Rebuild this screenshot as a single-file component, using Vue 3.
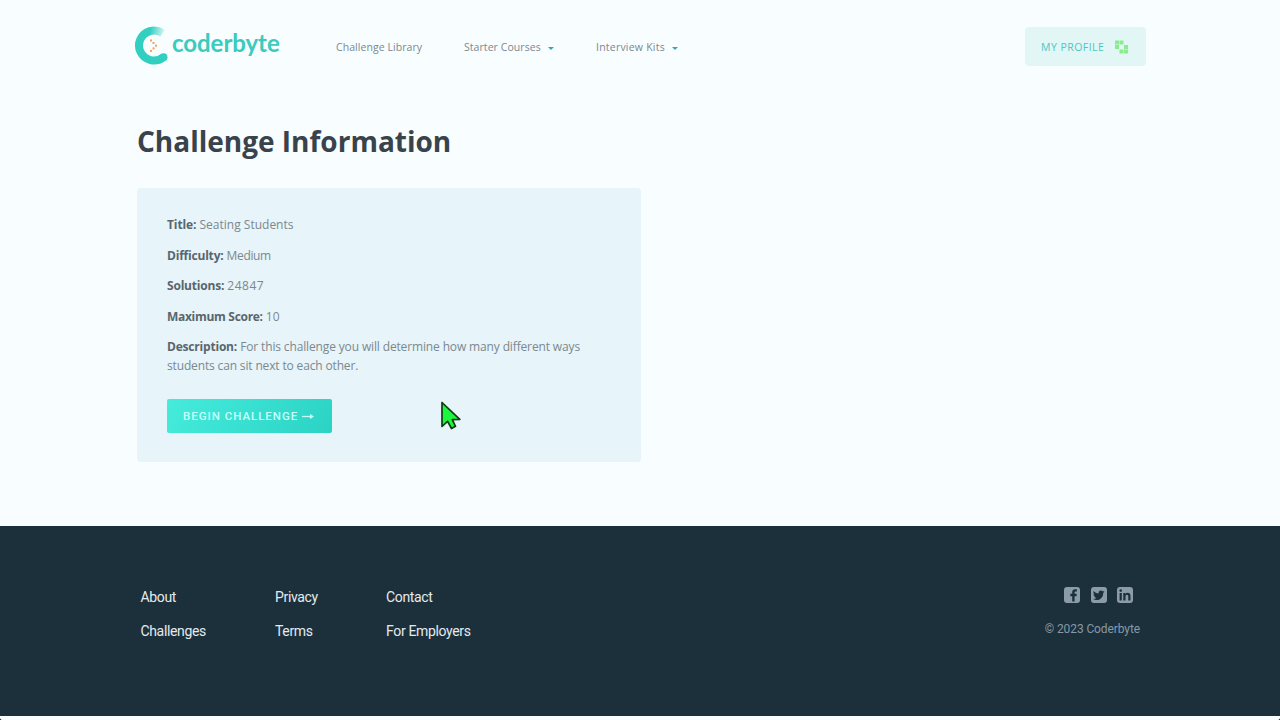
<template>
  <div class="page">
    <header class="header">
      <a class="logo">
        <svg class="logo-mark" width="38" height="40" viewBox="0 0 38 40">
          <defs>
            <linearGradient id="ring" gradientUnits="userSpaceOnUse" x1="18" y1="0" x2="33" y2="3">
              <stop offset="0" stop-color="#30cfc0" />
              <stop offset="1" stop-color="#30cfc0" stop-opacity="0.1" />
            </linearGradient>
          </defs>
          <path d="M16.5 5.2 A15 15 0 0 1 29.5 7.1" fill="none" stroke="url(#ring)" stroke-width="8" />
          <path d="M17 5.040 A15 15 0 1 0 30 31.500" fill="none" stroke="#30cfc0" stroke-width="8" />
          <circle cx="30.500" cy="31.200" r="4" fill="#30cfc0" />
          <g fill="#f3a44f">
            <rect v-for="(dot, i) in arrowDots" :key="i" :x="dot[0]" :y="dot[1]" width="2" height="2" />
          </g>
        </svg>
        <span class="logo-text">coderbyte</span>
      </a>
      <nav class="nav">
        <a class="nav-library">Challenge Library</a>
        <a class="nav-courses">Starter Courses <i class="caret"></i></a>
        <a class="nav-kits">Interview Kits <i class="caret"></i></a>
      </nav>
      <a class="profile">
        <span>MY PROFILE</span>
        <svg width="14" height="14" viewBox="0 0 14 14" fill="#8aec8c">
          <path d="M0 0.5h4v4h-4zM4.500 0.500h4v4h-4zM0 5h4v4h-4zM9 5h4v4h-4zM4.500 9.500h4v4h-4zM9 9.500h4v4h-4z" />
        </svg>
      </a>
    </header>

    <main class="main">
      <h1>Challenge Information</h1>
      <section class="card">
        <p v-for="item in details" :key="item.label" :class="item.cls">
          <b>{{ item.label }}:</b> <span>{{ item.value }}</span>
        </p>
        <p class="description">
          <b>Description:</b> <span class="line-one">For this challenge you will determine how many different ways</span><br />
          <span class="line-two">students can sit next to each other.</span>
        </p>
        <button class="begin">
          <span>BEGIN CHALLENGE</span>
          <svg width="12" height="8" viewBox="0 0 12 8">
            <path d="M0 4.500h9" stroke="currentColor" stroke-width="1.300" />
            <path d="M8 2L12 4.500L8 7z" fill="currentColor" />
          </svg>
        </button>
      </section>
    </main>

    <footer class="footer">
      <div class="links">
        <div v-for="(column, i) in footerLinks" :key="i" class="column">
          <a v-for="link in column" :key="link">{{ link }}</a>
        </div>
      </div>
      <div class="social">
        <div class="icons">
          <svg width="16" height="16" viewBox="0 0 16 16">
            <rect width="16" height="16" rx="3" fill="#8c9ba8" />
            <path d="M8.200 14.500V9.200H6.300V6.800h1.900V5.200c0-2 1.100-3 3-3h1.700v2.300h-1.200c-.8 0-1.100.4-1.100 1.100v1.200h2.200l-.3 2.400h-1.900v5.300z" fill="#1c303c" />
          </svg>
          <svg width="16" height="16" viewBox="0 0 16 16">
            <rect width="16" height="16" rx="3" fill="#8c9ba8" />
            <path d="M13.500 4.500c-.4.200-.9.300-1.300.4.500-.3.800-.7 1-1.200-.5.300-1 .5-1.500.6a2.400 2.400 0 0 0-4.100 2.200C5.600 6.400 3.800 5.400 2.700 4c-.6 1.100-.3 2.500.8 3.200-.4 0-.8-.1-1.100-.3 0 1.200.8 2.100 1.900 2.400-.4.100-.7.100-1.100 0 .3 1 1.200 1.600 2.300 1.700-1 .8-2.200 1.100-3.500 1 3.900 2.400 10.200.8 10.200-6 .5-.4.900-.9 1.300-1.500z" fill="#1c303c" />
          </svg>
          <svg width="16" height="16" viewBox="0 0 16 16">
            <rect width="16" height="16" rx="3" fill="#8c9ba8" />
            <g fill="#1c303c">
              <circle cx="3.700" cy="3.600" r="1.300" />
              <path d="M2.600 6h2.200v7.500H2.600zM6.300 6h2.100v1c.5-.8 1.200-1.200 2.200-1.200 2 0 2.900 1.200 2.900 3.300v4.400h-2.200V9.600c0-1.100-.4-1.800-1.300-1.800-1 0-1.500.7-1.500 1.800v3.900H6.300z" />
            </g>
          </svg>
        </div>
        <p class="copyright">© 2023 Coderbyte</p>
      </div>
    </footer>
    <div class="bottom-edge"></div>

    <svg class="cursor" width="24" height="32" viewBox="0 0 24 32">
      <path d="M2 2.500V26.500L7.600 21.300L11.500 28.500L15.500 26.300L12.300 19.700L19.800 19.300Z" fill="#1ff53c" stroke="#103a18" stroke-width="1.700" stroke-linejoin="round" />
    </svg>
  </div>
</template>

<script setup>
const details = [
  { label: "Title", value: "Seating Students", cls: "title" },
  { label: "Difficulty", value: "Medium", cls: "difficulty" },
  { label: "Solutions", value: "24847", cls: "solutions" },
  { label: "Maximum Score", value: "10", cls: "score" }
]

const footerLinks = [
  ["About", "Challenges"],
  ["Privacy", "Terms"],
  ["Contact", "For Employers"]
]

const arrowDots = [
  [17, 13.5],
  [19.5, 16],
  [22, 18.7],
  [19.5, 21.4],
  [17, 23.9]
]
</script>

<style>
body {
  background: #111;
}
</style>

<style scoped>
.page {
  position: relative;
  box-sizing: border-box;
  height: 720px;
  overflow: hidden;
  display: flex;
  flex-direction: column;
  border-radius: 0 0 3px 3px;
  background: #f8fdff;
  font-family: "Open Sans", "Noto Sans", sans-serif;
  color: #7b888e;
}

.header {
  display: flex;
  align-items: center;
  height: 94px;
  padding: 0 134px;
  flex: none;
}

.logo {
  display: flex;
  align-items: center;
  width: 202px;
}

.logo-mark {
  margin: -3px 1px 0 -1px;
}

.logo-text {
  font-family: Lato, sans-serif;
  font-weight: 700;
  font-size: 24px;
  line-height: 28px;
  letter-spacing: -0.05px;
  color: #3bcabe;
  margin-top: -8px;
}

.nav {
  display: flex;
  flex: 1;
  font-size: 10.5px;
  line-height: 16px;
  letter-spacing: 0.06px;
  white-space: nowrap;
}

.nav-library {
  width: 128px;
}

.nav-courses {
  width: 132px;
}

.nav-kits {
  letter-spacing: 0.22px;
}

.nav a {
  display: flex;
  align-items: center;
}

.caret {
  border: 3px solid transparent;
  border-top: 3px solid #35aaa8;
  border-bottom: 0;
  margin: 2px 0 0 7px;
}

.profile {
  display: flex;
  align-items: center;
  justify-content: space-between;
  box-sizing: border-box;
  width: 121px;
  height: 39px;
  margin-top: -1px;
  padding: 1px 17px 0 16px;
  border-radius: 4px;
  background: #e2f6f6;
  color: #4fc5bf;
  font-size: 10.5px;
  letter-spacing: 0.46px;
  white-space: nowrap;
}

.main {
  height: 432px;
  padding: 0 137px;
  flex: none;
}

h1 {
  margin: 27px 0 26px;
  font-size: 28px;
  line-height: 41px;
  font-weight: 700;
  color: #39434b;
  white-space: nowrap;
}

.card {
  box-sizing: border-box;
  width: 504px;
  height: 274px;
  padding: 28px 30px;
  border-radius: 4px;
  background: #e7f4f9;
  font-size: 12px;
  line-height: 18.4px;
  white-space: nowrap;
}

.card p {
  margin: 0 0 12.2px;
}

.card b {
  font-weight: 700;
  letter-spacing: -0.2px;
  color: #59666d;
}

.card .title b {
  letter-spacing: -0.1px;
}

.card .score b {
  letter-spacing: -0.3px;
}

.difficulty span {
  letter-spacing: -0.35px;
}

.solutions span {
  letter-spacing: 0.5px;
}

.line-one {
  letter-spacing: -0.14px;
}

.line-two {
  letter-spacing: -0.15px;
}

.card .description {
  margin-bottom: 24px;
}

.begin {
  display: flex;
  align-items: center;
  justify-content: space-between;
  box-sizing: border-box;
  width: 165px;
  height: 34px;
  padding: 0 18px 0 16px;
  border: 0;
  border-radius: 2px;
  background: linear-gradient(120deg, #45ecdc, #2bd3c5);
  color: #c9fffa;
  font-family: Roboto, sans-serif;
  font-size: 11.5px;
  font-weight: 500;
  letter-spacing: 0.97px;
  white-space: nowrap;
}

.footer {
  display: flex;
  justify-content: space-between;
  box-sizing: border-box;
  height: 190px;
  padding: 60px 140px 0 140.5px;
  background: #1c303c;
  color: #e5eaec;
  flex: none;
}

.links {
  display: grid;
  grid-template-columns: 134.5px 111px 100px;
  align-content: start;
  margin-top: 1px;
  font-family: Roboto, "Open Sans", sans-serif;
  font-size: 14px;
  letter-spacing: -0.35px;
  line-height: 20px;
  white-space: nowrap;
}

.column {
  display: flex;
  flex-direction: column;
  gap: 14px;
}

.icons {
  display: flex;
  justify-content: flex-end;
  gap: 10.5px;
  padding: 1px 7px 0 0;
}

.copyright {
  margin: 17px 0 0;
  font-family: Roboto, "Open Sans", sans-serif;
  font-size: 12px;
  letter-spacing: -0.1px;
  line-height: 18px;
  text-align: right;
  color: #8799a5;
  white-space: nowrap;
}

.bottom-edge {
  height: 4px;
  background: #f8fdff;
}

.cursor {
  position: absolute;
  left: 440px;
  top: 400px;
}
</style>
